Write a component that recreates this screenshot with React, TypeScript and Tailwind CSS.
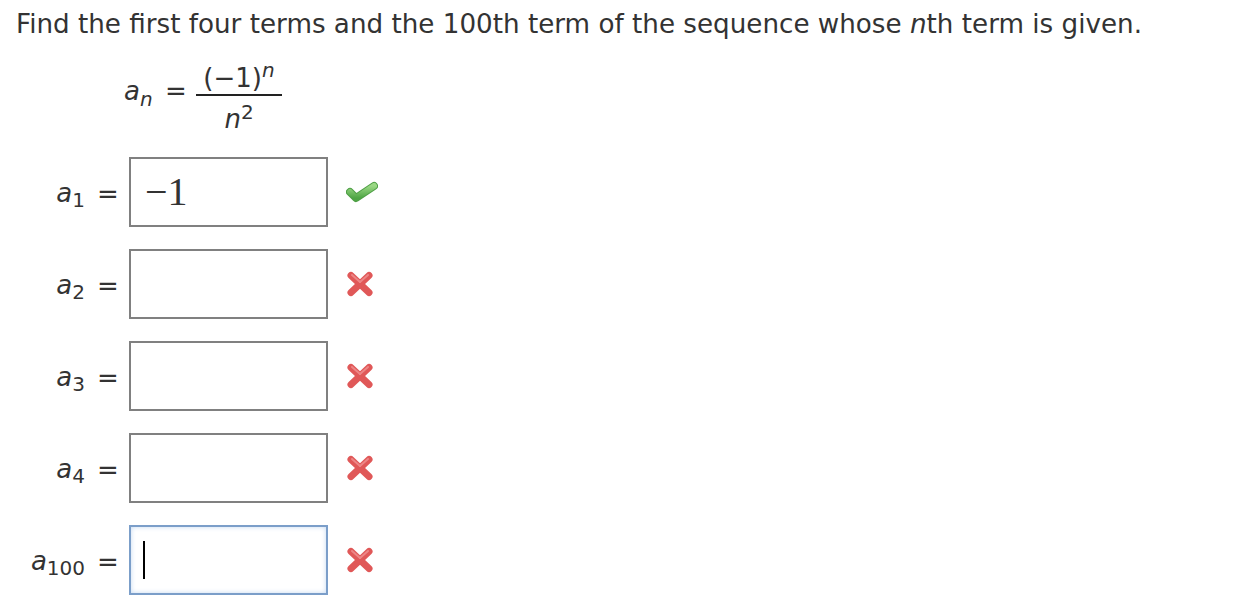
import React from "react";

const sans = { fontFamily: '"DejaVu Sans", Verdana, sans-serif' };

function Check() {
  return (
    <svg width="32" height="22" viewBox="0 0 32 22">
      <defs>
        <linearGradient id="ok" x1="0" y1="0" x2="0" y2="1">
          <stop offset="0" stopColor="#9ad884" />
          <stop offset="1" stopColor="#4ea544" />
        </linearGradient>
      </defs>
      <polyline
        points="4,11 10,17 28,5"
        fill="none"
        stroke="#4d9e44"
        strokeWidth="8"
        strokeLinecap="round"
        strokeLinejoin="round"
      />
      <polyline
        points="4,11 10,17 28,5"
        fill="none"
        stroke="url(#ok)"
        strokeWidth="6"
        strokeLinecap="round"
        strokeLinejoin="round"
      />
    </svg>
  );
}

function Cross() {
  return (
    <svg width="28" height="26" viewBox="0 0 28 26">
      <g stroke="#e05858" strokeWidth="7" strokeLinecap="round">
        <line x1="5" y1="4.5" x2="23" y2="21.5" />
        <line x1="23" y1="4.5" x2="5" y2="21.5" />
      </g>
      <g stroke="#f39a9a" strokeWidth="2" strokeLinecap="round" opacity="0.7">
        <line x1="6" y1="4" x2="14" y2="11" />
        <line x1="22" y1="4" x2="14" y2="11" />
      </g>
    </svg>
  );
}

type Row = { sub: string; value?: string; ok?: boolean; focused?: boolean };

const rows: Row[] = [
  { sub: "1", value: "−1", ok: true },
  { sub: "2" },
  { sub: "3" },
  { sub: "4" },
  { sub: "100", focused: true },
];

export default function App() {
  return (
    <div className="w-[1236px] h-[614px] bg-white text-[#333]" style={sans}>
      <p className="pl-4 pt-[7px] text-[26.2px] leading-[34px]">
        Find the first four terms and the 100th term of the sequence whose{" "}
        <i>n</i>th term is given.
      </p>

      {/* formula */}
      <div className="flex items-start pl-[124px] mt-[24px] text-[26px] leading-[26px]">
        <span className="w-[41px] mt-[13px] whitespace-nowrap">
          <i>a</i>
          <span className="relative top-[6px] text-[20px] italic">n</span>
        </span>
        <span className="w-[31px] mt-[13px]">=</span>
        <span className="w-[86px] flex flex-col items-center">
          <span className="whitespace-nowrap">
            (−1)<span className="relative -top-[10px] text-[20px] italic">n</span>
          </span>
          <span className="w-[86px] h-[2px] bg-[#222] mt-[1px]" />
          <span className="mt-[10px] whitespace-nowrap">
            <i>n</i>
            <span className="relative -top-[9px] text-[20px]">2</span>
          </span>
        </span>
      </div>

      <div className="flex flex-col gap-[22px] mt-[23px]">
        {rows.map((r) => (
          <div key={r.sub} className="flex items-center h-[70px]">
            <div className="w-[85px] text-right text-[26px] leading-[26px] whitespace-nowrap relative top-[2px]">
              <i>a</i>
              <span className="relative top-[5px] text-[20px]">{r.sub}</span>
            </div>
            <div className="w-[44px] pl-[12px] text-[26px] leading-[26px] relative top-[2px]">=</div>
            <div
              className={
                "w-[199px] h-[70px] flex items-center " +
                (r.focused
                  ? "pl-[12px] border-2 border-[#7b9ec9] shadow-[inset_0_0_5px_#c5d9f1]"
                  : "pl-[14px] border-2 border-[#808080]")
              }
            >
              {r.value && (
                <span
                  className="text-[40px] text-[#333] leading-none"
                  style={{ fontFamily: '"Liberation Serif", serif' }}
                >
                  {r.value}
                </span>
              )}
              {r.focused && <span className="w-[2px] h-[38px] bg-black" />}
            </div>
            <div className="ml-[18px] flex items-center">
              {r.ok ? <Check /> : <Cross />}
            </div>
          </div>
        ))}
      </div>
    </div>
  );
}
